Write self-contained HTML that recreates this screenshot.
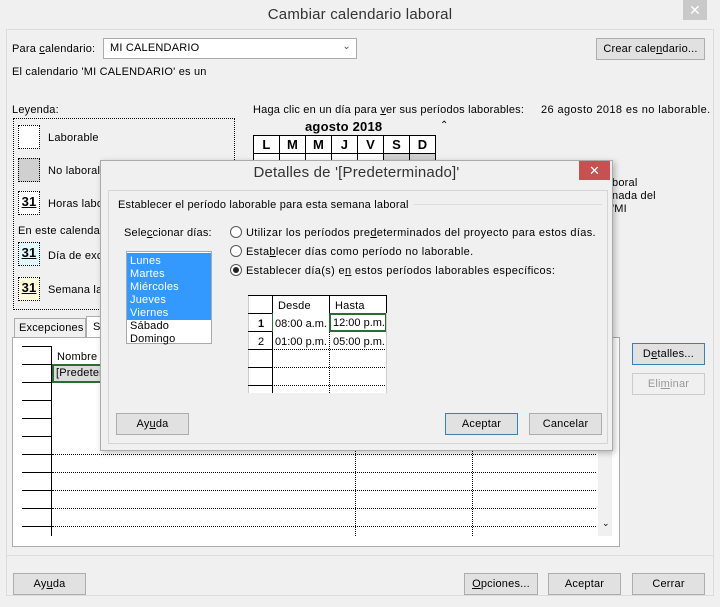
<!DOCTYPE html>
<html><head><meta charset="utf-8"><style>
*{box-sizing:border-box;margin:0;padding:0}
body{width:720px;height:607px;background:#f0f0f0;font-family:"Liberation Sans",sans-serif;font-size:11px;letter-spacing:0.2px;color:#000;position:relative;overflow:hidden}
.a{position:absolute;white-space:nowrap}
.btn{position:absolute;background:#e1e1e1;border:1px solid #adadad;text-align:center;font-size:11px;line-height:20px}
.lg{position:absolute;width:22px;height:24px;border:1px dotted #000;background:#fff;font-weight:bold;font-size:13px;text-align:center;line-height:20px;text-decoration:underline}
.cal td{border:1px solid #000;width:26px;height:18px;text-align:center;font-weight:bold;font-size:13px}
.hl{position:absolute;height:0;border-top:1px dotted #000}
.vl{position:absolute;width:0;border-left:1px dotted #000}
.rh{position:absolute;left:22px;width:30px;height:0;border-top:1px solid #000}
u{text-decoration:underline}
</style></head><body>
<div class="a" style="left:0;top:0;width:720px;text-align:center;font-size:15px;top:6px;color:#333">Cambiar calendario laboral</div>
<div class="a" style="left:683px;top:0;width:24px;height:20px;background:#c9c9c9;color:#fff;text-align:center;font-size:14px;line-height:20px">✕</div>
<div class="a" style="left:6px;top:29px;width:708px;height:567px;border:1px solid #dcdcdc"></div>

<div class="a" style="left:12px;top:43px">Para <u>c</u>alendario:</div>
<div class="a" style="left:103px;top:38px;width:254px;height:21px;background:#fff;border:1px solid #aaa;padding:3px 6px">MI CALENDARIO<span style="position:absolute;right:5px;top:2px;font-size:10px;color:#555">&#8964;</span></div>
<div class="btn" style="left:596px;top:38px;width:109px;height:22px">Crear cale<u>n</u>dario...</div>
<div class="a" style="left:12px;top:66px">El calendario 'MI CALENDARIO' es un</div>

<div class="a" style="left:12px;top:104px">Leyenda:</div>
<div class="a" style="left:13px;top:118px;width:222px;height:192px;border:1px dotted #000"></div>
<div class="lg" style="left:18px;top:125px"></div><div class="a" style="left:48px;top:132px">Laborable</div>
<div class="lg" style="left:18px;top:158px;background:#d0d0d0"></div><div class="a" style="left:48px;top:165px">No laboral</div>
<div class="lg" style="left:18px;top:191px">31</div><div class="a" style="left:48px;top:198px">Horas labo</div>
<div class="a" style="left:18px;top:225px">En este calendar</div>
<div class="lg" style="left:18px;top:242px;background:#dff8fb">31</div><div class="a" style="left:48px;top:250px">Día de exc</div>
<div class="lg" style="left:18px;top:277px;background:#fdfbd8">31</div><div class="a" style="left:48px;top:284px">Semana la</div>

<div class="a" style="left:253px;top:104px">Haga clic en un día para <u>v</u>er sus períodos laborables:</div>
<div class="a" style="left:541px;top:104px;letter-spacing:0.4px">26 agosto 2018 es no laborable.</div>
<div class="a" style="left:305px;top:119px;font-weight:bold;font-size:13px">agosto 2018</div>
<div class="a" style="left:440px;top:120px;font-size:10px">&#8963;</div>
<table class="cal a" style="left:253px;top:135px;border-collapse:collapse;background:#fff"><tr><td>L</td><td>M</td><td>M</td><td>J</td><td>V</td><td>S</td><td>D</td></tr><tr><td></td><td></td><td></td><td></td><td></td><td style="background:#d0d0d0"></td><td style="background:#d0d0d0"></td></tr></table>
<div class="a" style="left:612px;top:177px;line-height:13px">boral<br>nada del<br>'MI</div>

<div class="a" style="left:14px;top:318px;width:72px;height:20px;border:1px solid #adadad;background:#f0f0f0;padding:3px 4px">Excepciones</div>
<div class="a" style="left:86px;top:316px;width:20px;height:22px;border:1px solid #adadad;border-bottom:none;background:#fff;padding:4px 6px">S</div>
<div class="a" style="left:12px;top:337px;width:608px;height:210px;border:1px solid #adadad;background:#fff"></div>
<div class="a" style="left:22px;top:346px;width:590px;height:190px;background:#fff"></div>
<div class="a" style="left:51px;top:346px;width:0;height:190px;border-left:1px solid #000"></div>
<div class="a" style="left:57px;top:351px">Nombre</div>
<div class="a" style="left:52px;top:364px;width:50px;height:19px;background:#ddd;border:2px solid #2e6b34;padding:1px 2px">[Predeter</div>
<div class="rh" style="top:346px"></div><div class="rh" style="top:364px"></div><div class="rh" style="top:382px"></div><div class="rh" style="top:400px"></div><div class="rh" style="top:418px"></div><div class="rh" style="top:436px"></div><div class="rh" style="top:454px"></div><div class="rh" style="top:472px"></div><div class="rh" style="top:490px"></div><div class="rh" style="top:508px"></div><div class="rh" style="top:526px"></div>
<div class="hl" style="left:52px;top:454px;width:544px"></div><div class="hl" style="left:52px;top:472px;width:544px"></div><div class="hl" style="left:52px;top:490px;width:544px"></div><div class="hl" style="left:52px;top:508px;width:544px"></div><div class="hl" style="left:52px;top:526px;width:544px"></div>
<div class="vl" style="left:355px;top:450px;height:86px"></div><div class="vl" style="left:472px;top:450px;height:86px"></div>
<div class="a" style="left:598px;top:346px;width:14px;height:190px;background:#f0f0f0"></div>
<div class="a" style="left:602px;top:518px;font-size:9px">&#8964;</div>
<div class="btn" style="left:632px;top:343px;width:73px;height:22px;border-color:#3c7fb1">D<u>e</u>talles...</div>
<div class="btn" style="left:632px;top:373px;width:73px;height:22px;color:#999;border-color:#ccc;background:#f0f0f0">Eli<u>m</u>inar</div>

<div class="a" style="left:6px;top:555px;width:708px;border-top:1px solid #dcdcdc"></div>
<div class="btn" style="left:13px;top:573px;width:73px;height:22px">Ay<u>u</u>da</div>
<div class="btn" style="left:464px;top:573px;width:74px;height:22px"><u>O</u>pciones...</div>
<div class="btn" style="left:548px;top:573px;width:73px;height:22px">Aceptar</div>
<div class="btn" style="left:632px;top:573px;width:73px;height:22px">Cerrar</div>

<!-- dialog -->
<div class="a" style="left:100px;top:160px;width:513px;height:291px;background:#f0f0f0;border:1px solid #aaa;box-shadow:2px 2px 6px rgba(0,0,0,.25)"></div>
<div class="a" style="left:100px;top:164px;width:513px;text-align:center;font-size:15px;color:#333">Detalles de '[Predeterminado]'</div>
<div class="a" style="left:579px;top:161px;width:31px;height:19px;background:#c75050;color:#fff;text-align:center;font-size:13px;line-height:19px">✕</div>
<div class="a" style="left:108px;top:190px;width:500px;height:254px;border:1px solid #d5d5d5"></div>
<div class="a" style="left:118px;top:199px">Establecer el período laborable para esta semana laboral</div>
<div class="a" style="left:414px;top:204px;width:188px;border-top:1px solid #ddd"></div>
<div class="a" style="left:124px;top:227px">Sele<u>c</u>cionar días:</div>
<div class="a" style="left:126px;top:251px;width:86px;height:93px;background:#fff;border:1px solid #aaa;line-height:13px;font-size:11px;padding:1px 3px"><div style="background:#3399ff;color:#fff;margin:0 -3px;padding:2px 3px 0;height:67px">Lunes<br>Martes<br>Miércoles<br>Jueves<br>Viernes</div>Sábado<br>Domingo</div>
<div class="a" style="left:230px;top:226px;width:12px;height:12px;border:1px solid #555;border-radius:50%;background:#fff"></div>
<div class="a" style="left:246px;top:227px;letter-spacing:0.35px">Utilizar los períodos pre<u>d</u>eterminados del proyecto para estos días.</div>
<div class="a" style="left:230px;top:245px;width:12px;height:12px;border:1px solid #555;border-radius:50%;background:#fff"></div>
<div class="a" style="left:246px;top:246px;letter-spacing:0.35px">Esta<u>b</u>lecer días como período no laborable.</div>
<div class="a" style="left:230px;top:264px;width:12px;height:12px;border:1px solid #555;border-radius:50%;background:#fff"><div style="margin:2px;width:6px;height:6px;border-radius:50%;background:#222"></div></div>
<div class="a" style="left:246px;top:265px;letter-spacing:0.35px">Establecer día(s) e<u>n</u> estos períodos laborables específicos:</div>

<div class="a" style="left:248px;top:295px;width:139px;height:98px;background:#fff;border-left:1px solid #ccc"></div>
<div class="a" style="left:248px;top:295px;width:139px;border-top:1px solid #000"></div>
<div class="a" style="left:272px;top:295px;height:98px;border-left:1px solid #000"></div>
<div class="a" style="left:329px;top:295px;height:18px;border-left:1px solid #000"></div>
<div class="a" style="left:386px;top:295px;height:18px;border-left:1px solid #000"></div>
<div class="a" style="left:278px;top:300px">Desde</div><div class="a" style="left:335px;top:300px">Hasta</div>
<div class="a" style="left:248px;top:313px;width:24px;border-top:1px solid #000"></div><div class="a" style="left:248px;top:331px;width:24px;border-top:1px solid #000"></div><div class="a" style="left:248px;top:349px;width:24px;border-top:1px solid #000"></div><div class="a" style="left:248px;top:367px;width:24px;border-top:1px solid #000"></div><div class="a" style="left:248px;top:385px;width:24px;border-top:1px solid #000"></div>
<div class="a" style="left:258px;top:318px;font-weight:bold">1</div><div class="a" style="left:258px;top:336px">2</div>
<div class="a" style="left:272px;top:313px;width:58px;height:19px;border-left:1px solid #2e6b34"></div>
<div class="a" style="left:275px;top:318px;letter-spacing:0">08:00 a.m.</div>
<div class="a" style="left:329px;top:313px;width:58px;height:19px;border:2px solid #2e6b34;padding:2px 2px;letter-spacing:0">12:00 p.m.</div>
<div class="a" style="left:275px;top:336px;letter-spacing:0">01:00 p.m.</div><div class="a" style="left:333px;top:336px;letter-spacing:0">05:00 p.m.</div>
<div class="hl" style="left:272px;top:349px;width:115px"></div><div class="hl" style="left:272px;top:367px;width:115px"></div><div class="hl" style="left:272px;top:385px;width:115px"></div>
<div class="vl" style="left:329px;top:332px;height:61px"></div><div class="a" style="left:386px;top:313px;height:80px;border-left:1px solid #ccc"></div>

<div class="btn" style="left:116px;top:413px;width:73px;height:22px">Ay<u>u</u>da</div>
<div class="btn" style="left:445px;top:413px;width:73px;height:22px;border-color:#3c7fb1">Aceptar</div>
<div class="btn" style="left:529px;top:413px;width:73px;height:22px">Cancelar</div>
</body></html>
